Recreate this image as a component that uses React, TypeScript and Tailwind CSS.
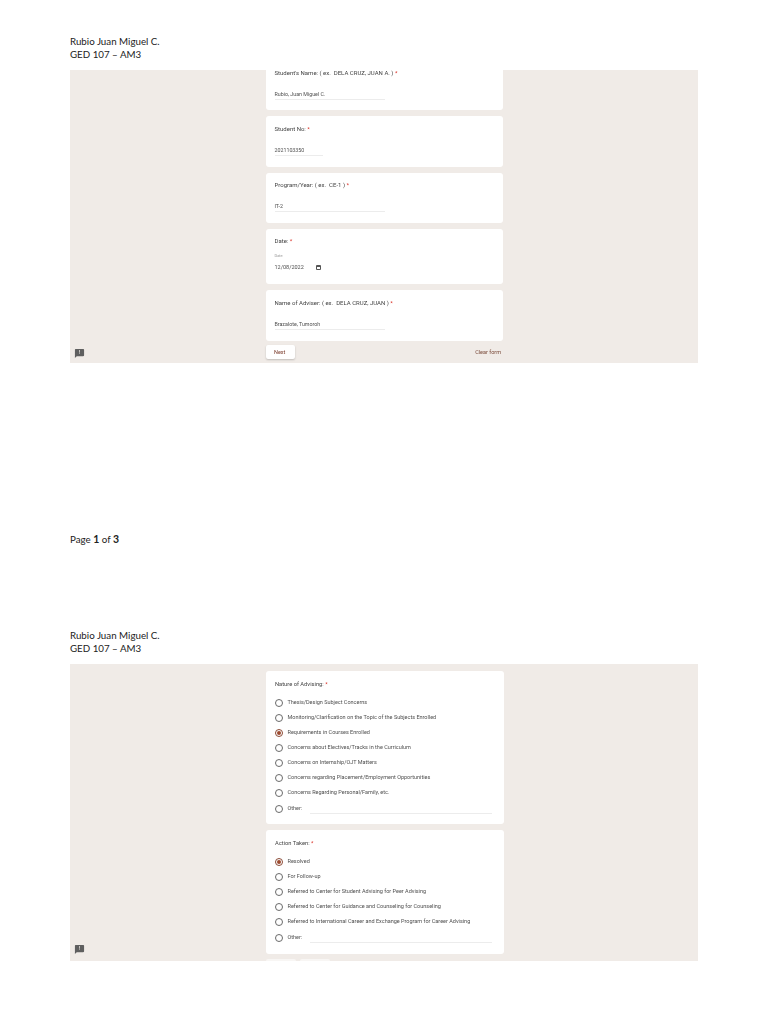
const sans = "font-['Roboto','Liberation_Sans',sans-serif]";

function Star() {
  return <span className="text-[#d93025]"> *</span>;
}

function Feedback({ bottom }: { bottom: string }) {
  return (
    <svg viewBox="0 0 24 24" className={`absolute left-[4px] w-[11px] h-[11px] ${bottom}`} fill="#5f5f5f">
      <path d="M20 2H4c-1.1 0-2 .9-2 2v18l4-4h14c1.1 0 2-.9 2-2V4c0-1.1-.9-2-2-2zm-7 10h-2v-2h2v2zm0-4h-2V5h2v3z" />
    </svg>
  );
}

function TextCard({ label, value, wide, h, pt }: { label: string; value: string; wide?: boolean; h: string; pt: string }) {
  return (
    <div className={`bg-white rounded-[3px] px-[8.5px] ${h} ${pt} shrink-0`}>
      <div className="text-[6px] leading-[8px] text-[#444]">
        {label}
        <Star />
      </div>
      <div className={`mt-[14px] text-[5.3px] leading-[7px] text-[#4f4f4f] border-b border-[#ececec] pb-[1px] ${wide ? "w-[110px]" : "w-[48px]"}`}>
        {value}
      </div>
    </div>
  );
}

function Radio({ label, checked, other }: { label: string; checked?: boolean; other?: boolean }) {
  return (
    <div className={`flex items-center h-[15px] gap-[4.5px] ${other ? "mt-[1px]" : ""}`}>
      <span
        className={`w-[8px] h-[8px] rounded-full border flex items-center justify-center shrink-0 ${
          checked ? "border-[#8a4a36]" : "border-[#6a6a6a]"
        }`}
      >
        {checked && <span className="w-[4px] h-[4px] rounded-full bg-[#9c4a2f]" />}
      </span>
      <span className="text-[5.5px] leading-[7px] text-[#4f4f4f] whitespace-nowrap">{label}</span>
      {other && <span className="flex-1 self-end mb-[2px] ml-[3px] mr-[3px] border-b border-[#ececec]" />}
    </div>
  );
}

function RadioCard({ label, options, pt, h, gap }: { label: string; options: { t: string; c?: boolean; o?: boolean }[]; pt: string; h: string; gap: string }) {
  return (
    <div className={`bg-white rounded-[3px] px-[9px] ${pt} ${h} shrink-0`}>
      <div className={`text-[5.75px] leading-[8px] text-[#444] ${gap}`}>
        {label}
        <Star />
      </div>
      {options.map((o) => (
        <Radio key={o.t} label={o.t} checked={o.c} other={o.o} />
      ))}
    </div>
  );
}

function Header() {
  return (
    <div className="font-['Lato','Liberation_Sans',sans-serif] text-[9.75px] leading-[13px] text-[#222]">
      <div>Rubio Juan Miguel C.</div>
      <div>GED 107 – AM3</div>
    </div>
  );
}

export default function App() {
  return (
    <div className="w-[768px] h-[1024px] bg-white overflow-hidden pl-[70px] pt-[35px]">
      <Header />
      <div className={`relative mt-[9px] w-[628px] h-[293px] bg-[#f0ebe7] overflow-hidden pl-[196px] ${sans} blur-[0.45px]`}>
        <div className="w-[237px] flex flex-col gap-[6px]">
          <div className="bg-white rounded-b-[3px] h-[40px] px-[8.5px] shrink-0">
            <div className="text-[6px] leading-[8px] text-[#444] -mt-[1px]">
              Student's Name: ( ex.&nbsp; DELA CRUZ, JUAN A. )
              <Star />
            </div>
            <div className="mt-[14px] text-[5.3px] leading-[7px] text-[#4f4f4f] border-b border-[#ececec] pb-[1px] w-[110px]">
              Rubio, Juan Miguel C.
            </div>
          </div>
          <TextCard label="Student No:" value="2021103350" h="h-[51px]" pt="pt-[9px]" />
          <TextCard label="Program/Year: ( ex.&nbsp; CE-1 )" value="IT-2" wide h="h-[50px]" pt="pt-[8px]" />
          <div className="bg-white rounded-[3px] h-[55px] px-[8.5px] pt-[8px] shrink-0">
            <div className="text-[6px] leading-[8px] text-[#444]">
              Date:
              <Star />
            </div>
            <div className="mt-[7.5px] text-[4px] leading-[5px] text-[#999]">Date</div>
            <div className="mt-[6px] w-[48px] flex items-center justify-between pr-[2px] text-[5.5px] leading-[7px] text-[#4f4f4f]">
              <span>12/08/2022</span>
              <span className="w-[5px] h-[5px] border border-t-2 border-[#555] rounded-[1px]" />
            </div>
          </div>
          <TextCard label="Name of Adviser: ( ex.&nbsp; DELA CRUZ, JUAN )" value="Brazalote, Tumoroh" wide h="h-[51px]" pt="pt-[9px]" />
          <div className="flex items-center justify-between -mt-[2px] pr-[2px]">
            <div className="w-[29px] h-[14px] bg-white rounded-[2px] shadow-[0_1px_2px_rgba(0,0,0,0.2)] flex items-center pl-[8px] text-[5.5px] text-[#7a3a2a]">
              Next
            </div>
            <div className="text-[5.5px] text-[#7a4a3a]">Clear form</div>
          </div>
        </div>
        <Feedback bottom="bottom-[4px]" />
      </div>

      <div className="mt-[170px] font-['Lato','Liberation_Sans',sans-serif] text-[9.75px] leading-[13px] text-[#222]">
        Page <b className="font-bold text-[10.5px]">1</b> of <b className="font-bold text-[10.5px]">3</b>
      </div>

      <div className="mt-[83px]">
        <Header />
      </div>

      <div className={`relative mt-[9px] w-[628px] h-[297px] bg-[#f0ebe7] overflow-hidden pl-[196px] pt-[7px] ${sans} blur-[0.45px]`}>
        <div className="w-[238px] flex flex-col gap-[6px]">
          <RadioCard
            label="Nature of Advising:"
            pt="pt-[9px]"
            h="h-[153px]"
            gap="mb-[7px]"
            options={[
              { t: "Thesis/Design Subject Concerns" },
              { t: "Monitoring/Clarification on the Topic of the Subjects Enrolled" },
              { t: "Requirements in Courses Enrolled", c: true },
              { t: "Concerns about Electives/Tracks in the Curriculum" },
              { t: "Concerns on Internship/OJT Matters" },
              { t: "Concerns regarding Placement/Employment Opportunities" },
              { t: "Concerns Regarding Personal/Family, etc." },
              { t: "Other:", o: true },
            ]}
          />
          <RadioCard
            label="Action Taken:"
            pt="pt-[9px]"
            h="h-[124px]"
            gap="mb-[7px]"
            options={[
              { t: "Resolved", c: true },
              { t: "For Follow-up" },
              { t: "Referred to Center for Student Advising for Peer Advising" },
              { t: "Referred to Center for Guidance and  Counseling for Counseling" },
              { t: "Referred to International Career and Exchange Program for Career Advising" },
              { t: "Other:", o: true },
            ]}
          />
          <div className="flex gap-[4px] -mt-[1px]">
            <div className="w-[30px] h-[10px] bg-[#f8f6f4] rounded-[2px]" />
            <div className="w-[30px] h-[10px] bg-[#f8f6f4] rounded-[2px]" />
          </div>
        </div>
        <Feedback bottom="bottom-[6px]" />
      </div>
    </div>
  );
}
